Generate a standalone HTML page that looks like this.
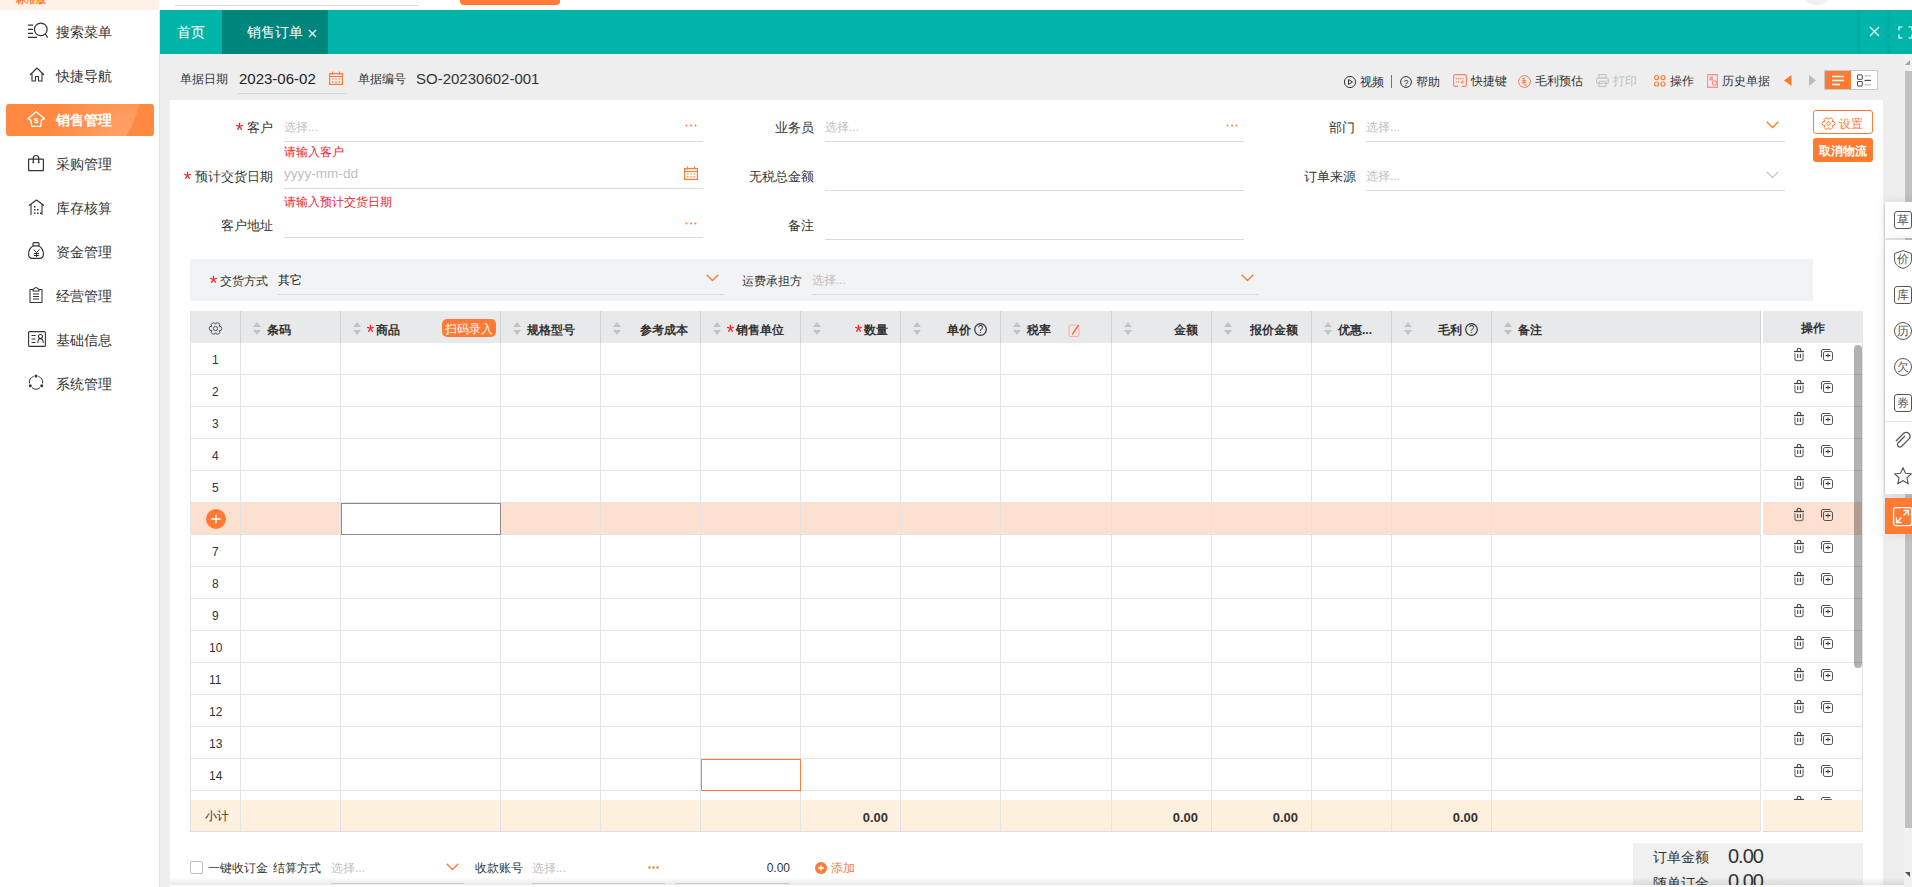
<!DOCTYPE html><html><head><meta charset="utf-8"><style>
*{margin:0;padding:0;box-sizing:border-box}
html,body{width:1912px;height:887px;overflow:hidden;background:#fff;font-family:"Liberation Sans",sans-serif;color:#333}
.a{position:absolute}
.t{position:absolute;white-space:nowrap;line-height:1}
svg{position:absolute;overflow:visible}
</style></head><body><div class="a" style="left:0px;top:0px;width:159px;height:10px;background:#fff1ea"></div>
<div class="t" style="left:16px;top:-5px;font-size:9.5px;color:#ff7a33;font-weight:bold">标准版</div>
<div class="a" style="left:175px;top:5px;width:244px;height:1px;background:#ddd"></div>
<div class="a" style="left:460px;top:-4px;width:100px;height:9px;background:#ff7a33;border-radius:4px"></div>
<div class="a" style="left:1805px;top:-8px;width:24px;height:13px;background:#f0f0f0;border-radius:50%"></div>
<div class="a" style="left:159px;top:10px;width:1px;height:877px;background:#e2e2e2"></div>
<div class="a" style="left:6px;top:104px;width:148px;height:32px;background:#ff8940;border-radius:3px;overflow:hidden"><div class="a" style="left:-80px;top:-132px;width:216px;height:216px;border-radius:50%;background:radial-gradient(circle at 50% 50%,rgba(255,255,255,0) 50%,rgba(255,255,255,.1) 100%),radial-gradient(circle at 90% 78%,rgba(255,255,255,.2) 0,rgba(255,255,255,0) 30%)"></div></div>
<div class="t" style="left:56px;top:25px;font-size:14px;color:#333;">搜索菜单</div>
<div class="t" style="left:56px;top:69px;font-size:14px;color:#333;">快捷导航</div>
<div class="t" style="left:56px;top:113px;font-size:14px;color:#fff;font-weight:bold">销售管理</div>
<div class="t" style="left:56px;top:157px;font-size:14px;color:#333;">采购管理</div>
<div class="t" style="left:56px;top:201px;font-size:14px;color:#333;">库存核算</div>
<div class="t" style="left:56px;top:245px;font-size:14px;color:#333;">资金管理</div>
<div class="t" style="left:56px;top:289px;font-size:14px;color:#333;">经营管理</div>
<div class="t" style="left:56px;top:333px;font-size:14px;color:#333;">基础信息</div>
<div class="t" style="left:56px;top:377px;font-size:14px;color:#333;">系统管理</div>
<svg style="left:27px;top:22px" width="22" height="17" viewBox="0 0 22 17"><g fill="none" stroke="#333" stroke-width="1.2"><path d="M1 3.2h5M1 7.3h5M1 11.4h5M1 15.3h9"/><circle cx="13.8" cy="7.4" r="6.3"/><path d="M18.3 12l2.4 3.6"/></g></svg>
<svg style="left:29px;top:67px" width="16" height="15" viewBox="0 0 16 15"><g fill="none" stroke="#333" stroke-width="1.1" stroke-linejoin="round"><path d="M1 8L8 1l7 7M3 6.5V14h3.5V9.5h3V14H13V6.5"/></g></svg>
<svg style="left:27px;top:110px" width="19" height="18" viewBox="0 0 19 18"><path d="M9.2 1.7L1.1 8.6L4 10.4L4.8 16.4H13.7L14.4 10.4L17.3 8.6Z" fill="none" stroke="#fff" stroke-width="1.3" stroke-linejoin="round"/><text x="9.2" y="13" font-size="8" font-weight="bold" fill="#fff" text-anchor="middle" font-family="Liberation Sans">$</text></svg>
<svg style="left:27px;top:154px" width="18" height="18" viewBox="0 0 18 18"><g fill="none" stroke="#333" stroke-width="1.2"><rect x="1.6" y="5.1" width="14.8" height="11.6" rx=".6"/><path d="M6.3 8.2V4.2a2.7 2.7 0 0 1 5.4 0v4"/></g><circle cx="6.3" cy="8.4" r=".9" fill="#333"/><circle cx="11.7" cy="8.4" r=".9" fill="#333"/></svg>
<svg style="left:28px;top:199px" width="17" height="16" viewBox="0 0 17 16"><g fill="none" stroke="#333" stroke-width="1.1" stroke-linejoin="round"><path d="M1 6.5L8.5 1 16 6.5M3 5v11M14 5v11"/></g><g fill="#333"><rect x="6" y="7" width="1.5" height="1.5"/><rect x="6" y="10" width="1.5" height="1.5"/><rect x="9" y="10" width="1.5" height="1.5"/><rect x="6" y="13.5" width="1.5" height="1.5"/><rect x="9" y="13.5" width="1.5" height="1.5"/><rect x="12" y="13.5" width="1.5" height="1.5"/></g></svg>
<svg style="left:27px;top:241px" width="18" height="19" viewBox="0 0 18 19"><g fill="none" stroke="#333" stroke-width="1.2" stroke-linejoin="round"><rect x="6" y="1.6" width="6" height="3.2" rx="1"/><path d="M6.6 4.8C3 6.6 1.6 10 1.6 13.2c0 2.4 1.4 4.2 3.8 4.2h7.2c2.4 0 3.8-1.8 3.8-4.2 0-3.2-1.4-6.6-5-8.4"/><path d="M6.5 8.5L9.5 11.5L12.5 8.5M9.5 11.5V16M7 12.5H12M7 14.5H12" stroke-width="1"/></g></svg>
<svg style="left:29px;top:287px" width="14" height="16" viewBox="0 0 14 16"><g fill="none" stroke="#333" stroke-width="1.05" stroke-linejoin="round"><path d="M4 2.5H1v13h12v-13h-3"/><path d="M4 4V2.5l2-1.7h2l2 1.7V4z"/><path d="M4 7h6M4 9.5h6M4 12h6"/></g></svg>
<svg style="left:28px;top:331px" width="18" height="16" viewBox="0 0 18 16"><g fill="none" stroke="#333" stroke-width="1.1"><rect x="0.6" y="0.6" width="16.8" height="14.8" rx="1"/><path d="M3.5 4.5h4M3.5 8h4M3.5 11.5h4"/><circle cx="12.5" cy="5.5" r="2"/><path d="M9.8 12c0-2.5 1.2-4.3 2.7-4.3s2.7 1.8 2.7 4.3"/></g></svg>
<svg style="left:28px;top:374px" width="16" height="17" viewBox="0 0 16 17"><g fill="none" stroke="#333" stroke-width="1"><path d="M10.47 2.38A6.6 6.6 0 0 1 14.54 9.42M12.06 13.70A6.6 6.6 0 0 1 3.94 13.70M1.46 9.42A6.6 6.6 0 0 1 5.53 2.38"/></g><g fill="#333"><circle cx="8.00" cy="1.90" r="1.5"/><circle cx="2.28" cy="11.80" r="1.5"/><circle cx="13.72" cy="11.80" r="1.5"/></g></svg>
<div class="a" style="left:160px;top:10px;width:1752px;height:44px;background:#00b4aa"></div>
<div class="a" style="left:222px;top:10px;width:106px;height:44px;background:#00857d"></div>
<div class="t" style="left:177px;top:25px;font-size:14px;color:#fff;">首页</div>
<div class="t" style="left:247px;top:25px;font-size:14px;color:#fff;">销售订单</div>
<svg style="left:308px;top:29px" width="9" height="9" viewBox="0 0 9 9"><path d="M1 1l7 7M8 1L1 8" stroke="#fff" stroke-width="1.2"/></svg>
<div class="a" style="left:1855px;top:10px;width:5px;height:44px;background:linear-gradient(90deg,rgba(0,0,0,0),rgba(0,0,0,.07))"></div>
<div class="a" style="left:1885px;top:10px;width:5px;height:44px;background:linear-gradient(90deg,rgba(0,0,0,0),rgba(0,0,0,.07))"></div>
<svg style="left:1869px;top:26px" width="11" height="11" viewBox="0 0 11 11"><path d="M1 1l9 9M10 1L1 10" stroke="#fff" stroke-width="1.2"/></svg>
<svg style="left:1898px;top:26px" width="15" height="13" viewBox="0 0 15 13"><path d="M1 4.5V1h3.5M10.5 1H14v3.5M14 8.5V12h-3.5M4.5 12H1V8.5" fill="none" stroke="#fff" stroke-width="1.2"/></svg>
<div class="a" style="left:160px;top:54px;width:1752px;height:833px;background:#eeeeee"></div>
<div class="a" style="left:1904px;top:54px;width:8px;height:833px;background:#f1f1f1"></div>
<div class="a" style="left:1905px;top:71px;width:7px;height:757px;background:#c1c1c1"></div>
<svg style="left:1904px;top:60px" width="8" height="6" viewBox="0 0 8 6"><path d="M1 5L6 0v5z" fill="#a3a3a3"/></svg>
<svg style="left:1904px;top:872px" width="8" height="6" viewBox="0 0 8 6"><path d="M1 0h5v5z" fill="#505050"/></svg>
<div class="t" style="left:180px;top:73px;font-size:12px;color:#333;">单据日期</div>
<div class="t" style="left:239px;top:71px;font-size:15px;color:#222;">2023-06-02</div>
<div class="a" style="left:238px;top:93px;width:109px;height:1px;background:#d9d9d9"></div>
<svg style="left:329px;top:71px" width="14" height="14" viewBox="0 0 14 14"><g fill="none" stroke="#ff7a33" stroke-width="1.2"><rect x="0.6" y="2.6" width="12.8" height="10.8"/><path d="M0.6 5.5h12.8M3.5 0.5v3M10.5 0.5v3"/><path d="M3 8h1.5M6.2 8h1.5M9.5 8h1.5M3 10.8h1.5M6.2 10.8h1.5M9.5 10.8h1.5"/></g></svg>
<div class="t" style="left:358px;top:73px;font-size:12px;color:#333;">单据编号</div>
<div class="t" style="left:416px;top:71px;font-size:15px;color:#333;">SO-20230602-001</div>
<svg style="left:1344px;top:76px" width="12" height="12" viewBox="0 0 12 12"><g fill="none" stroke="#333" stroke-width="1"><circle cx="6" cy="6" r="5.6"/><path d="M4.5 3.5v5l4-2.5z"/></g></svg>
<div class="t" style="left:1360px;top:76px;font-size:12px;color:#333;">视频</div>
<div class="a" style="left:1391px;top:75px;width:1px;height:13px;background:#8a6a6a"></div>
<svg style="left:1400px;top:75.5px" width="12" height="12" viewBox="0 0 12 12"><g fill="none" stroke="#333" stroke-width="1"><circle cx="6" cy="6" r="5.4"/></g><text x="6" y="9.6" font-size="9" text-anchor="middle" fill="#333" font-family="Liberation Sans">?</text></svg>
<div class="t" style="left:1416px;top:76px;font-size:12px;color:#333;">帮助</div>
<svg style="left:1453px;top:74px" width="14" height="13" viewBox="0 0 14 13"><g fill="none" stroke="#ff7f5a" stroke-width="1.1"><path d="M5.2 12.4H2.1A1.5 1.5 0 0 1 0.6 10.9V2.1A1.5 1.5 0 0 1 2.1 0.6H11.9A1.5 1.5 0 0 1 13.4 2.1V10.9A1.5 1.5 0 0 1 11.9 12.4H8.8"/><path d="M9.8 6.2V8.6H8"/></g><g fill="#ff7a55"><rect x="2.8" y="4" width="1.2" height="1.2"/><rect x="5" y="4" width="1.2" height="1.2"/><rect x="7.2" y="4" width="1.2" height="1.2"/><rect x="9.4" y="4" width="1.2" height="1.2"/><rect x="2.8" y="7.4" width="1.2" height="1.2"/><rect x="5" y="7.4" width="1.2" height="1.2"/></g></svg>
<div class="t" style="left:1471px;top:75px;font-size:12px;color:#333;">快捷键</div>
<svg style="left:1518px;top:74.5px" width="13" height="13" viewBox="0 0 13 13"><g fill="none" stroke="#ff7060" stroke-width="1"><circle cx="6.5" cy="6.5" r="5.9"/><path d="M4.2 3.6L6.8 3.2M3.8 5.6H8.2M3.6 7.6H8.4M6 3.4V8.6c0 1 .6 1.4 1.6 1.4H9" stroke="#ff7a33"/></g></svg>
<div class="t" style="left:1535px;top:75px;font-size:12px;color:#333;">毛利预估</div>
<svg style="left:1596px;top:74px" width="13" height="13" viewBox="0 0 13 13"><g fill="none" stroke="#c6c6c6" stroke-width="1.2"><rect x="3" y="0.6" width="7" height="3.5"/><rect x="0.6" y="4" width="11.8" height="5.5" rx="1.5"/><rect x="3" y="7.5" width="7" height="5"/></g></svg>
<div class="t" style="left:1613px;top:75px;font-size:12px;color:#c0c0c0;">打印</div>
<svg style="left:1654px;top:75px" width="12" height="12" viewBox="0 0 12 12"><g fill="none" stroke="#ff7a33" stroke-width="1.1"><rect x="0.6" y="0.6" width="4" height="4" rx="2"/><rect x="7" y="0.6" width="4" height="4" rx="2"/><rect x="0.6" y="7" width="4" height="4" rx="2"/><rect x="7" y="7" width="4" height="4" rx="2"/></g></svg>
<div class="t" style="left:1670px;top:75px;font-size:12px;color:#333;">操作</div>
<svg style="left:1707px;top:74px" width="11" height="14" viewBox="0 0 11 14"><g fill="none" stroke="#ff8a8a" stroke-width="1.1"><path d="M0.6 0.6h9.8v12.8H0.6z"/><rect x="2.5" y="2.5" width="3.5" height="4" fill="#ff9a9a" stroke="none"/><circle cx="7.5" cy="9" r="2.2"/></g></svg>
<div class="t" style="left:1722px;top:75px;font-size:12px;color:#333;">历史单据</div>
<svg style="left:1784px;top:75px" width="8" height="11" viewBox="0 0 8 11"><path d="M7.5 0v11L0 5.5z" fill="#ff7a33"/></svg>
<svg style="left:1809px;top:75px" width="7" height="11" viewBox="0 0 7 11"><path d="M0 0v11l7-5.5z" fill="#bcbcbc"/></svg>
<div class="a" style="left:1824px;top:70px;width:54px;height:20px;background:#fff;border:1px solid #c8c8c8"></div>
<div class="a" style="left:1825px;top:71px;width:26px;height:18px;background:#ff7a33"></div>
<svg style="left:1831px;top:75px" width="14" height="11" viewBox="0 0 14 11"><path d="M1 1.5h12M1 5.5h12M1 9.5h8" stroke="#fff" stroke-width="1.5"/></svg>
<svg style="left:1856px;top:74px" width="18" height="13" viewBox="0 0 18 13"><g fill="none" stroke="#444" stroke-width="1"><rect x="1.5" y="0.9" width="4.8" height="4.4" rx="0.5"/><rect x="1.5" y="7.5" width="4.8" height="4.6" rx="0.5"/></g><path d="M8.5 1.9h6.5M8.5 10.8h6.5" stroke="#c0c0c0" stroke-width="1.2"/><path d="M8.5 6.4h6.5" stroke="#444" stroke-width="1.1"/></svg>
<div class="a" style="left:170px;top:100px;width:1713px;height:787px;background:#fff"></div>
<div class="t" style="right:1639px;top:121px;font-size:13px;color:#333;">客户</div>
<svg style="left:236px;top:122.5px" width="7" height="7" viewBox="0 0 7 7"><path d="M3.5 0.2V4M3.5 3.5L0.6 2.4M3.5 3.5L6.4 2.4M3.5 3.5L1.6 6.3M3.5 3.5L5.4 6.3" stroke="#f5222d" stroke-width="1.3" stroke-linecap="round"/></svg>
<div class="t" style="left:284px;top:121px;font-size:12px;color:#c0c0c0;">选择...</div>
<div class="a" style="left:284px;top:141px;width:419px;height:1px;background:#dcdcdc"></div>
<svg style="left:685px;top:124px" width="12" height="3" viewBox="0 0 12 3"><g fill="#ff7a33"><circle cx="1.5" cy="1.5" r="1"/><circle cx="6" cy="1.5" r="1"/><circle cx="10.5" cy="1.5" r="1"/></g></svg>
<div class="t" style="left:284px;top:146px;font-size:12px;color:#f5222d;">请输入客户</div>
<div class="t" style="right:1639px;top:170px;font-size:13px;color:#333;">预计交货日期</div>
<svg style="left:184px;top:171.5px" width="7" height="7" viewBox="0 0 7 7"><path d="M3.5 0.2V4M3.5 3.5L0.6 2.4M3.5 3.5L6.4 2.4M3.5 3.5L1.6 6.3M3.5 3.5L5.4 6.3" stroke="#f5222d" stroke-width="1.3" stroke-linecap="round"/></svg>
<div class="t" style="left:284px;top:167px;font-size:13.6px;color:#c0c0c0;">yyyy-mm-dd</div>
<div class="a" style="left:284px;top:188px;width:419px;height:1px;background:#dcdcdc"></div>
<svg style="left:684px;top:166px" width="14" height="14" viewBox="0 0 14 14"><g fill="none" stroke="#ff7a33" stroke-width="1.2"><rect x="0.6" y="2.6" width="12.8" height="10.8"/><path d="M0.6 5.5h12.8M3.5 0.5v3M10.5 0.5v3"/><path d="M3 8h1.5M6.2 8h1.5M9.5 8h1.5M3 10.8h1.5M6.2 10.8h1.5M9.5 10.8h1.5"/></g></svg>
<div class="t" style="left:284px;top:196px;font-size:12px;color:#f5222d;">请输入预计交货日期</div>
<div class="t" style="right:1639px;top:219px;font-size:13px;color:#333;">客户地址</div>
<div class="a" style="left:284px;top:237px;width:419px;height:1px;background:#dcdcdc"></div>
<svg style="left:685px;top:222px" width="12" height="3" viewBox="0 0 12 3"><g fill="#ff7a33"><circle cx="1.5" cy="1.5" r="1"/><circle cx="6" cy="1.5" r="1"/><circle cx="10.5" cy="1.5" r="1"/></g></svg>
<div class="t" style="right:1098px;top:121px;font-size:13px;color:#333;">业务员</div>
<div class="t" style="left:825px;top:121px;font-size:12px;color:#c0c0c0;">选择...</div>
<div class="a" style="left:825px;top:141px;width:419px;height:1px;background:#dcdcdc"></div>
<svg style="left:1226px;top:124px" width="12" height="3" viewBox="0 0 12 3"><g fill="#ff7a33"><circle cx="1.5" cy="1.5" r="1"/><circle cx="6" cy="1.5" r="1"/><circle cx="10.5" cy="1.5" r="1"/></g></svg>
<div class="t" style="right:1098px;top:170px;font-size:13px;color:#333;">无税总金额</div>
<div class="a" style="left:825px;top:190px;width:419px;height:1px;background:#dcdcdc"></div>
<div class="t" style="right:1098px;top:219px;font-size:13px;color:#333;">备注</div>
<div class="a" style="left:825px;top:239px;width:419px;height:1px;background:#dcdcdc"></div>
<div class="t" style="right:557px;top:121px;font-size:13px;color:#333;">部门</div>
<div class="t" style="left:1366px;top:121px;font-size:12px;color:#c0c0c0;">选择...</div>
<div class="a" style="left:1366px;top:141px;width:419px;height:1px;background:#dcdcdc"></div>
<svg style="left:1766px;top:121px" width="13" height="8" viewBox="0 0 13 8"><path d="M0.7 0.7l5.8 5.8 5.8-5.8" fill="none" stroke="#ff7a33" stroke-width="1.3"/></svg>
<div class="t" style="right:556px;top:170px;font-size:13px;color:#333;">订单来源</div>
<div class="t" style="left:1366px;top:170px;font-size:12px;color:#c0c0c0;">选择...</div>
<div class="a" style="left:1366px;top:190px;width:419px;height:1px;background:#dcdcdc"></div>
<svg style="left:1766px;top:170.5px" width="13" height="8" viewBox="0 0 13 8"><path d="M0.7 0.7l5.8 5.8 5.8-5.8" fill="none" stroke="#c8c8c8" stroke-width="1.3"/></svg>
<div class="a" style="left:1813px;top:110px;width:60px;height:24px;border:1px solid #ff7a33;border-radius:3px;background:#fff"></div>
<svg style="left:1822px;top:117px" width="13" height="13" viewBox="0 0 13 13"><g fill="none" stroke="#ff7a33" stroke-width="1"><path d="M10.14 4.40A2.15 2.15 0 1 1 10.14 8.60A2.15 2.15 0 1 1 6.50 10.70A2.15 2.15 0 1 1 2.86 8.60A2.15 2.15 0 1 1 2.86 4.40A2.15 2.15 0 1 1 6.50 2.30A2.15 2.15 0 1 1 10.14 4.40Z"/><circle cx="6.5" cy="6.5" r="1.8"/></g></svg>
<div class="t" style="left:1839px;top:118px;font-size:12px;color:#ff7a33;">设置</div>
<div class="a" style="left:1813px;top:138px;width:60px;height:24px;background:#ff7a33;border-radius:3px"></div>
<div class="t" style="left:1819px;top:145px;font-size:12px;color:#fff;font-weight:bold">取消物流</div>
<div class="a" style="left:190px;top:259px;width:1623px;height:42px;background:#f2f3f5"></div>
<svg style="left:210px;top:275.5px" width="7" height="7" viewBox="0 0 7 7"><path d="M3.5 0.2V4M3.5 3.5L0.6 2.4M3.5 3.5L6.4 2.4M3.5 3.5L1.6 6.3M3.5 3.5L5.4 6.3" stroke="#f5222d" stroke-width="1.3" stroke-linecap="round"/></svg>
<div class="t" style="left:220px;top:275px;font-size:12px;color:#333;">交货方式</div>
<div class="t" style="left:278px;top:274px;font-size:12px;color:#111;">其它</div>
<div class="a" style="left:278px;top:294px;width:446px;height:1px;background:#dcdcdc"></div>
<svg style="left:706px;top:274px" width="13" height="8" viewBox="0 0 13 8"><path d="M0.7 0.7l5.8 5.8 5.8-5.8" fill="none" stroke="#ff7a33" stroke-width="1.3"/></svg>
<div class="t" style="left:742px;top:275px;font-size:12px;color:#333;">运费承担方</div>
<div class="t" style="left:812px;top:274px;font-size:12px;color:#c0c0c0;">选择...</div>
<div class="a" style="left:812px;top:294px;width:447px;height:1px;background:#dcdcdc"></div>
<svg style="left:1241px;top:274px" width="13" height="8" viewBox="0 0 13 8"><path d="M0.7 0.7l5.8 5.8 5.8-5.8" fill="none" stroke="#ff7a33" stroke-width="1.3"/></svg>
<div class="a" style="left:191px;top:503px;width:1569px;height:31px;background:#fde0cf"></div>
<div class="a" style="left:1763px;top:503px;width:100px;height:31px;background:#fde0cf"></div>
<div class="a" style="left:191px;top:800px;width:1569px;height:31px;background:#fdf0dc"></div>
<div class="a" style="left:1763px;top:800px;width:100px;height:31px;background:#fdf0dc"></div>
<div class="a" style="left:191px;top:311px;width:1569px;height:32px;background:#e8e9eb"></div>
<div class="a" style="left:1763px;top:311px;width:100px;height:32px;background:#e8e9eb"></div>
<div class="a" style="left:190px;top:311px;width:1px;height:521px;background:#e3e3e3"></div>
<div class="a" style="left:240px;top:311px;width:1px;height:32px;background:#cfd0d2"></div>
<div class="a" style="left:240px;top:343px;width:1px;height:488px;background:#e3e3e3"></div>
<div class="a" style="left:340px;top:311px;width:1px;height:32px;background:#cfd0d2"></div>
<div class="a" style="left:340px;top:343px;width:1px;height:488px;background:#e3e3e3"></div>
<div class="a" style="left:500px;top:311px;width:1px;height:32px;background:#cfd0d2"></div>
<div class="a" style="left:500px;top:343px;width:1px;height:488px;background:#e3e3e3"></div>
<div class="a" style="left:600px;top:311px;width:1px;height:32px;background:#cfd0d2"></div>
<div class="a" style="left:600px;top:343px;width:1px;height:488px;background:#e3e3e3"></div>
<div class="a" style="left:700px;top:311px;width:1px;height:32px;background:#cfd0d2"></div>
<div class="a" style="left:700px;top:343px;width:1px;height:488px;background:#e3e3e3"></div>
<div class="a" style="left:800px;top:311px;width:1px;height:32px;background:#cfd0d2"></div>
<div class="a" style="left:800px;top:343px;width:1px;height:488px;background:#e3e3e3"></div>
<div class="a" style="left:900px;top:311px;width:1px;height:32px;background:#cfd0d2"></div>
<div class="a" style="left:900px;top:343px;width:1px;height:488px;background:#e3e3e3"></div>
<div class="a" style="left:1000px;top:311px;width:1px;height:32px;background:#cfd0d2"></div>
<div class="a" style="left:1000px;top:343px;width:1px;height:488px;background:#e3e3e3"></div>
<div class="a" style="left:1111px;top:311px;width:1px;height:32px;background:#cfd0d2"></div>
<div class="a" style="left:1111px;top:343px;width:1px;height:488px;background:#e3e3e3"></div>
<div class="a" style="left:1211px;top:311px;width:1px;height:32px;background:#cfd0d2"></div>
<div class="a" style="left:1211px;top:343px;width:1px;height:488px;background:#e3e3e3"></div>
<div class="a" style="left:1311px;top:311px;width:1px;height:32px;background:#cfd0d2"></div>
<div class="a" style="left:1311px;top:343px;width:1px;height:488px;background:#e3e3e3"></div>
<div class="a" style="left:1391px;top:311px;width:1px;height:32px;background:#cfd0d2"></div>
<div class="a" style="left:1391px;top:343px;width:1px;height:488px;background:#e3e3e3"></div>
<div class="a" style="left:1491px;top:311px;width:1px;height:32px;background:#cfd0d2"></div>
<div class="a" style="left:1491px;top:343px;width:1px;height:488px;background:#e3e3e3"></div>
<div class="a" style="left:1760px;top:311px;width:1px;height:32px;background:#cfd0d2"></div>
<div class="a" style="left:1760px;top:343px;width:1px;height:488px;background:#e3e3e3"></div>
<div class="a" style="left:1862px;top:343px;width:1px;height:489px;background:#e3e3e3"></div>
<div class="a" style="left:191px;top:374px;width:1569px;height:1px;background:#e3e3e3"></div>
<div class="a" style="left:1763px;top:374px;width:99px;height:1px;background:#e3e3e3"></div>
<div class="a" style="left:191px;top:406px;width:1569px;height:1px;background:#e3e3e3"></div>
<div class="a" style="left:1763px;top:406px;width:99px;height:1px;background:#e3e3e3"></div>
<div class="a" style="left:191px;top:438px;width:1569px;height:1px;background:#e3e3e3"></div>
<div class="a" style="left:1763px;top:438px;width:99px;height:1px;background:#e3e3e3"></div>
<div class="a" style="left:191px;top:470px;width:1569px;height:1px;background:#e3e3e3"></div>
<div class="a" style="left:1763px;top:470px;width:99px;height:1px;background:#e3e3e3"></div>
<div class="a" style="left:191px;top:502px;width:1569px;height:1px;background:#e3e3e3"></div>
<div class="a" style="left:1763px;top:502px;width:99px;height:1px;background:#e3e3e3"></div>
<div class="a" style="left:191px;top:534px;width:1569px;height:1px;background:#e3e3e3"></div>
<div class="a" style="left:1763px;top:534px;width:99px;height:1px;background:#e3e3e3"></div>
<div class="a" style="left:191px;top:566px;width:1569px;height:1px;background:#e3e3e3"></div>
<div class="a" style="left:1763px;top:566px;width:99px;height:1px;background:#e3e3e3"></div>
<div class="a" style="left:191px;top:598px;width:1569px;height:1px;background:#e3e3e3"></div>
<div class="a" style="left:1763px;top:598px;width:99px;height:1px;background:#e3e3e3"></div>
<div class="a" style="left:191px;top:630px;width:1569px;height:1px;background:#e3e3e3"></div>
<div class="a" style="left:1763px;top:630px;width:99px;height:1px;background:#e3e3e3"></div>
<div class="a" style="left:191px;top:662px;width:1569px;height:1px;background:#e3e3e3"></div>
<div class="a" style="left:1763px;top:662px;width:99px;height:1px;background:#e3e3e3"></div>
<div class="a" style="left:191px;top:694px;width:1569px;height:1px;background:#e3e3e3"></div>
<div class="a" style="left:1763px;top:694px;width:99px;height:1px;background:#e3e3e3"></div>
<div class="a" style="left:191px;top:726px;width:1569px;height:1px;background:#e3e3e3"></div>
<div class="a" style="left:1763px;top:726px;width:99px;height:1px;background:#e3e3e3"></div>
<div class="a" style="left:191px;top:758px;width:1569px;height:1px;background:#e3e3e3"></div>
<div class="a" style="left:1763px;top:758px;width:99px;height:1px;background:#e3e3e3"></div>
<div class="a" style="left:191px;top:790px;width:1569px;height:1px;background:#e3e3e3"></div>
<div class="a" style="left:1763px;top:790px;width:99px;height:1px;background:#e3e3e3"></div>
<div class="a" style="left:190px;top:831px;width:1570px;height:1px;background:#dcdcdc"></div>
<div class="a" style="left:1763px;top:831px;width:100px;height:1px;background:#dcdcdc"></div>
<div class="a" style="left:341px;top:503px;width:160px;height:32px;background:#fff;border:1px solid #8c8c8c"></div>
<div class="a" style="left:701px;top:759px;width:100px;height:32px;border:1px solid #ff7a33"></div>
<svg style="left:209px;top:322px" width="13" height="13" viewBox="0 0 13 13"><g fill="none" stroke="#555" stroke-width="1"><path d="M10.14 4.40A2.15 2.15 0 1 1 10.14 8.60A2.15 2.15 0 1 1 6.50 10.70A2.15 2.15 0 1 1 2.86 8.60A2.15 2.15 0 1 1 2.86 4.40A2.15 2.15 0 1 1 6.50 2.30A2.15 2.15 0 1 1 10.14 4.40Z"/><circle cx="6.5" cy="6.5" r="2.1"/></g></svg>
<svg style="left:253px;top:322px" width="8" height="13" viewBox="0 0 8 13"><path d="M4 0L8 5H0z M4 13L8 8H0z" fill="#c2c2c2"/></svg>
<div class="t" style="left:267px;top:324px;font-size:12px;color:#333;font-weight:bold">条码</div>
<svg style="left:353px;top:322px" width="8" height="13" viewBox="0 0 8 13"><path d="M4 0L8 5H0z M4 13L8 8H0z" fill="#c2c2c2"/></svg>
<svg style="left:367px;top:324.5px" width="7" height="7" viewBox="0 0 7 7"><path d="M3.5 0.2V4M3.5 3.5L0.6 2.4M3.5 3.5L6.4 2.4M3.5 3.5L1.6 6.3M3.5 3.5L5.4 6.3" stroke="#f5222d" stroke-width="1.3" stroke-linecap="round"/></svg>
<div class="t" style="left:376px;top:324px;font-size:12px;color:#333;font-weight:bold">商品</div>
<div class="a" style="left:442px;top:319px;width:54px;height:18px;background:#ff7a33;border-radius:5px"></div>
<div class="t" style="left:445px;top:323px;font-size:12px;color:#fff;">扫码录入</div>
<svg style="left:513px;top:322px" width="8" height="13" viewBox="0 0 8 13"><path d="M4 0L8 5H0z M4 13L8 8H0z" fill="#c2c2c2"/></svg>
<div class="t" style="left:527px;top:324px;font-size:12px;color:#333;font-weight:bold">规格型号</div>
<svg style="left:613px;top:322px" width="8" height="13" viewBox="0 0 8 13"><path d="M4 0L8 5H0z M4 13L8 8H0z" fill="#c2c2c2"/></svg>
<div class="t" style="right:1224px;top:324px;font-size:12px;color:#333;font-weight:bold">参考成本</div>
<svg style="left:713px;top:322px" width="8" height="13" viewBox="0 0 8 13"><path d="M4 0L8 5H0z M4 13L8 8H0z" fill="#c2c2c2"/></svg>
<svg style="left:727px;top:324.5px" width="7" height="7" viewBox="0 0 7 7"><path d="M3.5 0.2V4M3.5 3.5L0.6 2.4M3.5 3.5L6.4 2.4M3.5 3.5L1.6 6.3M3.5 3.5L5.4 6.3" stroke="#f5222d" stroke-width="1.3" stroke-linecap="round"/></svg>
<div class="t" style="left:736px;top:324px;font-size:12px;color:#333;font-weight:bold">销售单位</div>
<svg style="left:813px;top:322px" width="8" height="13" viewBox="0 0 8 13"><path d="M4 0L8 5H0z M4 13L8 8H0z" fill="#c2c2c2"/></svg>
<svg style="left:855px;top:324.5px" width="7" height="7" viewBox="0 0 7 7"><path d="M3.5 0.2V4M3.5 3.5L0.6 2.4M3.5 3.5L6.4 2.4M3.5 3.5L1.6 6.3M3.5 3.5L5.4 6.3" stroke="#f5222d" stroke-width="1.3" stroke-linecap="round"/></svg>
<div class="t" style="right:1024px;top:324px;font-size:12px;color:#333;font-weight:bold">数量</div>
<svg style="left:913px;top:322px" width="8" height="13" viewBox="0 0 8 13"><path d="M4 0L8 5H0z M4 13L8 8H0z" fill="#c2c2c2"/></svg>
<div class="t" style="right:941px;top:324px;font-size:12px;color:#333;font-weight:bold">单价</div>
<svg style="left:974px;top:323px" width="13" height="13" viewBox="0 0 13 13"><circle cx="6.5" cy="6.5" r="5.8" fill="none" stroke="#333" stroke-width="1.2"/><text x="6.5" y="10.2" font-size="10" text-anchor="middle" fill="#333" font-family="Liberation Sans">?</text></svg>
<svg style="left:1013px;top:322px" width="8" height="13" viewBox="0 0 8 13"><path d="M4 0L8 5H0z M4 13L8 8H0z" fill="#c2c2c2"/></svg>
<div class="t" style="left:1027px;top:324px;font-size:12px;color:#333;font-weight:bold">税率</div>
<svg style="left:1068px;top:324px" width="12" height="13" viewBox="0 0 12 13"><rect x="1" y="1" width="10" height="11.5" rx="1.5" fill="none" stroke="#ffb0a0" stroke-width="1.1"/><path d="M10.5 1.2L4.2 10.5" stroke="#ff6a2a" stroke-width="1.4"/></svg>
<svg style="left:1124px;top:322px" width="8" height="13" viewBox="0 0 8 13"><path d="M4 0L8 5H0z M4 13L8 8H0z" fill="#c2c2c2"/></svg>
<div class="t" style="right:714px;top:324px;font-size:12px;color:#333;font-weight:bold">金额</div>
<svg style="left:1224px;top:322px" width="8" height="13" viewBox="0 0 8 13"><path d="M4 0L8 5H0z M4 13L8 8H0z" fill="#c2c2c2"/></svg>
<div class="t" style="right:614px;top:324px;font-size:12px;color:#333;font-weight:bold">报价金额</div>
<svg style="left:1324px;top:322px" width="8" height="13" viewBox="0 0 8 13"><path d="M4 0L8 5H0z M4 13L8 8H0z" fill="#c2c2c2"/></svg>
<div class="t" style="left:1338px;top:324px;font-size:12px;color:#333;font-weight:bold">优惠...</div>
<svg style="left:1404px;top:322px" width="8" height="13" viewBox="0 0 8 13"><path d="M4 0L8 5H0z M4 13L8 8H0z" fill="#c2c2c2"/></svg>
<div class="t" style="right:450px;top:324px;font-size:12px;color:#333;font-weight:bold">毛利</div>
<svg style="left:1465px;top:323px" width="13" height="13" viewBox="0 0 13 13"><circle cx="6.5" cy="6.5" r="5.8" fill="none" stroke="#333" stroke-width="1.2"/><text x="6.5" y="10.2" font-size="10" text-anchor="middle" fill="#333" font-family="Liberation Sans">?</text></svg>
<svg style="left:1504px;top:322px" width="8" height="13" viewBox="0 0 8 13"><path d="M4 0L8 5H0z M4 13L8 8H0z" fill="#c2c2c2"/></svg>
<div class="t" style="left:1518px;top:324px;font-size:12px;color:#333;font-weight:bold">备注</div>
<div class="t" style="left:1801px;top:322px;font-size:12px;color:#333;font-weight:bold">操作</div>
<div class="t" style="left:212px;top:354px;font-size:12px;color:#333;">1</div>
<svg style="left:1793px;top:347px" width="12" height="15" viewBox="0 0 12 15"><g fill="none" stroke="#444" stroke-width="1.1"><path d="M1 4.5H11" stroke-width="1.3"/><path d="M4.2 4.3V3a1.8 1.8 0 0 1 3.6 0V4.3"/><path d="M1.9 6.2V11.6a2 2 0 0 0 2 2H8.1a2 2 0 0 0 2-2V6.2" stroke="#777" stroke-width="1.2"/><path d="M4.7 7V11M7.4 7V11"/></g></svg>
<svg style="left:1820px;top:348px" width="14" height="14" viewBox="0 0 14 14"><g fill="none" stroke="#555" stroke-width="1"><path d="M1.5 9.5V3A1.5 1.5 0 0 1 3 1.5H10.5"/><rect x="3.5" y="3.5" width="9" height="9" rx="1.6"/><path d="M5.6 7.5H10.3" stroke="#222" stroke-width="1.3"/><path d="M8 5.3V9.7" stroke="#666"/></g></svg>
<div class="t" style="left:212px;top:386px;font-size:12px;color:#333;">2</div>
<svg style="left:1793px;top:379px" width="12" height="15" viewBox="0 0 12 15"><g fill="none" stroke="#444" stroke-width="1.1"><path d="M1 4.5H11" stroke-width="1.3"/><path d="M4.2 4.3V3a1.8 1.8 0 0 1 3.6 0V4.3"/><path d="M1.9 6.2V11.6a2 2 0 0 0 2 2H8.1a2 2 0 0 0 2-2V6.2" stroke="#777" stroke-width="1.2"/><path d="M4.7 7V11M7.4 7V11"/></g></svg>
<svg style="left:1820px;top:380px" width="14" height="14" viewBox="0 0 14 14"><g fill="none" stroke="#555" stroke-width="1"><path d="M1.5 9.5V3A1.5 1.5 0 0 1 3 1.5H10.5"/><rect x="3.5" y="3.5" width="9" height="9" rx="1.6"/><path d="M5.6 7.5H10.3" stroke="#222" stroke-width="1.3"/><path d="M8 5.3V9.7" stroke="#666"/></g></svg>
<div class="t" style="left:212px;top:418px;font-size:12px;color:#333;">3</div>
<svg style="left:1793px;top:411px" width="12" height="15" viewBox="0 0 12 15"><g fill="none" stroke="#444" stroke-width="1.1"><path d="M1 4.5H11" stroke-width="1.3"/><path d="M4.2 4.3V3a1.8 1.8 0 0 1 3.6 0V4.3"/><path d="M1.9 6.2V11.6a2 2 0 0 0 2 2H8.1a2 2 0 0 0 2-2V6.2" stroke="#777" stroke-width="1.2"/><path d="M4.7 7V11M7.4 7V11"/></g></svg>
<svg style="left:1820px;top:412px" width="14" height="14" viewBox="0 0 14 14"><g fill="none" stroke="#555" stroke-width="1"><path d="M1.5 9.5V3A1.5 1.5 0 0 1 3 1.5H10.5"/><rect x="3.5" y="3.5" width="9" height="9" rx="1.6"/><path d="M5.6 7.5H10.3" stroke="#222" stroke-width="1.3"/><path d="M8 5.3V9.7" stroke="#666"/></g></svg>
<div class="t" style="left:212px;top:450px;font-size:12px;color:#333;">4</div>
<svg style="left:1793px;top:443px" width="12" height="15" viewBox="0 0 12 15"><g fill="none" stroke="#444" stroke-width="1.1"><path d="M1 4.5H11" stroke-width="1.3"/><path d="M4.2 4.3V3a1.8 1.8 0 0 1 3.6 0V4.3"/><path d="M1.9 6.2V11.6a2 2 0 0 0 2 2H8.1a2 2 0 0 0 2-2V6.2" stroke="#777" stroke-width="1.2"/><path d="M4.7 7V11M7.4 7V11"/></g></svg>
<svg style="left:1820px;top:444px" width="14" height="14" viewBox="0 0 14 14"><g fill="none" stroke="#555" stroke-width="1"><path d="M1.5 9.5V3A1.5 1.5 0 0 1 3 1.5H10.5"/><rect x="3.5" y="3.5" width="9" height="9" rx="1.6"/><path d="M5.6 7.5H10.3" stroke="#222" stroke-width="1.3"/><path d="M8 5.3V9.7" stroke="#666"/></g></svg>
<div class="t" style="left:212px;top:482px;font-size:12px;color:#333;">5</div>
<svg style="left:1793px;top:475px" width="12" height="15" viewBox="0 0 12 15"><g fill="none" stroke="#444" stroke-width="1.1"><path d="M1 4.5H11" stroke-width="1.3"/><path d="M4.2 4.3V3a1.8 1.8 0 0 1 3.6 0V4.3"/><path d="M1.9 6.2V11.6a2 2 0 0 0 2 2H8.1a2 2 0 0 0 2-2V6.2" stroke="#777" stroke-width="1.2"/><path d="M4.7 7V11M7.4 7V11"/></g></svg>
<svg style="left:1820px;top:476px" width="14" height="14" viewBox="0 0 14 14"><g fill="none" stroke="#555" stroke-width="1"><path d="M1.5 9.5V3A1.5 1.5 0 0 1 3 1.5H10.5"/><rect x="3.5" y="3.5" width="9" height="9" rx="1.6"/><path d="M5.6 7.5H10.3" stroke="#222" stroke-width="1.3"/><path d="M8 5.3V9.7" stroke="#666"/></g></svg>
<svg style="left:206px;top:509px" width="20" height="20" viewBox="0 0 20 20"><circle cx="10" cy="10" r="10" fill="#ff7a33"/><path d="M10 5.5v9M5.5 10h9" stroke="#fff" stroke-width="1.3"/></svg>
<svg style="left:1793px;top:507px" width="12" height="15" viewBox="0 0 12 15"><g fill="none" stroke="#444" stroke-width="1.1"><path d="M1 4.5H11" stroke-width="1.3"/><path d="M4.2 4.3V3a1.8 1.8 0 0 1 3.6 0V4.3"/><path d="M1.9 6.2V11.6a2 2 0 0 0 2 2H8.1a2 2 0 0 0 2-2V6.2" stroke="#777" stroke-width="1.2"/><path d="M4.7 7V11M7.4 7V11"/></g></svg>
<svg style="left:1820px;top:508px" width="14" height="14" viewBox="0 0 14 14"><g fill="none" stroke="#555" stroke-width="1"><path d="M1.5 9.5V3A1.5 1.5 0 0 1 3 1.5H10.5"/><rect x="3.5" y="3.5" width="9" height="9" rx="1.6"/><path d="M5.6 7.5H10.3" stroke="#222" stroke-width="1.3"/><path d="M8 5.3V9.7" stroke="#666"/></g></svg>
<div class="t" style="left:212px;top:546px;font-size:12px;color:#333;">7</div>
<svg style="left:1793px;top:539px" width="12" height="15" viewBox="0 0 12 15"><g fill="none" stroke="#444" stroke-width="1.1"><path d="M1 4.5H11" stroke-width="1.3"/><path d="M4.2 4.3V3a1.8 1.8 0 0 1 3.6 0V4.3"/><path d="M1.9 6.2V11.6a2 2 0 0 0 2 2H8.1a2 2 0 0 0 2-2V6.2" stroke="#777" stroke-width="1.2"/><path d="M4.7 7V11M7.4 7V11"/></g></svg>
<svg style="left:1820px;top:540px" width="14" height="14" viewBox="0 0 14 14"><g fill="none" stroke="#555" stroke-width="1"><path d="M1.5 9.5V3A1.5 1.5 0 0 1 3 1.5H10.5"/><rect x="3.5" y="3.5" width="9" height="9" rx="1.6"/><path d="M5.6 7.5H10.3" stroke="#222" stroke-width="1.3"/><path d="M8 5.3V9.7" stroke="#666"/></g></svg>
<div class="t" style="left:212px;top:578px;font-size:12px;color:#333;">8</div>
<svg style="left:1793px;top:571px" width="12" height="15" viewBox="0 0 12 15"><g fill="none" stroke="#444" stroke-width="1.1"><path d="M1 4.5H11" stroke-width="1.3"/><path d="M4.2 4.3V3a1.8 1.8 0 0 1 3.6 0V4.3"/><path d="M1.9 6.2V11.6a2 2 0 0 0 2 2H8.1a2 2 0 0 0 2-2V6.2" stroke="#777" stroke-width="1.2"/><path d="M4.7 7V11M7.4 7V11"/></g></svg>
<svg style="left:1820px;top:572px" width="14" height="14" viewBox="0 0 14 14"><g fill="none" stroke="#555" stroke-width="1"><path d="M1.5 9.5V3A1.5 1.5 0 0 1 3 1.5H10.5"/><rect x="3.5" y="3.5" width="9" height="9" rx="1.6"/><path d="M5.6 7.5H10.3" stroke="#222" stroke-width="1.3"/><path d="M8 5.3V9.7" stroke="#666"/></g></svg>
<div class="t" style="left:212px;top:610px;font-size:12px;color:#333;">9</div>
<svg style="left:1793px;top:603px" width="12" height="15" viewBox="0 0 12 15"><g fill="none" stroke="#444" stroke-width="1.1"><path d="M1 4.5H11" stroke-width="1.3"/><path d="M4.2 4.3V3a1.8 1.8 0 0 1 3.6 0V4.3"/><path d="M1.9 6.2V11.6a2 2 0 0 0 2 2H8.1a2 2 0 0 0 2-2V6.2" stroke="#777" stroke-width="1.2"/><path d="M4.7 7V11M7.4 7V11"/></g></svg>
<svg style="left:1820px;top:604px" width="14" height="14" viewBox="0 0 14 14"><g fill="none" stroke="#555" stroke-width="1"><path d="M1.5 9.5V3A1.5 1.5 0 0 1 3 1.5H10.5"/><rect x="3.5" y="3.5" width="9" height="9" rx="1.6"/><path d="M5.6 7.5H10.3" stroke="#222" stroke-width="1.3"/><path d="M8 5.3V9.7" stroke="#666"/></g></svg>
<div class="t" style="left:209px;top:642px;font-size:12px;color:#333;">10</div>
<svg style="left:1793px;top:635px" width="12" height="15" viewBox="0 0 12 15"><g fill="none" stroke="#444" stroke-width="1.1"><path d="M1 4.5H11" stroke-width="1.3"/><path d="M4.2 4.3V3a1.8 1.8 0 0 1 3.6 0V4.3"/><path d="M1.9 6.2V11.6a2 2 0 0 0 2 2H8.1a2 2 0 0 0 2-2V6.2" stroke="#777" stroke-width="1.2"/><path d="M4.7 7V11M7.4 7V11"/></g></svg>
<svg style="left:1820px;top:636px" width="14" height="14" viewBox="0 0 14 14"><g fill="none" stroke="#555" stroke-width="1"><path d="M1.5 9.5V3A1.5 1.5 0 0 1 3 1.5H10.5"/><rect x="3.5" y="3.5" width="9" height="9" rx="1.6"/><path d="M5.6 7.5H10.3" stroke="#222" stroke-width="1.3"/><path d="M8 5.3V9.7" stroke="#666"/></g></svg>
<div class="t" style="left:209px;top:674px;font-size:12px;color:#333;">11</div>
<svg style="left:1793px;top:667px" width="12" height="15" viewBox="0 0 12 15"><g fill="none" stroke="#444" stroke-width="1.1"><path d="M1 4.5H11" stroke-width="1.3"/><path d="M4.2 4.3V3a1.8 1.8 0 0 1 3.6 0V4.3"/><path d="M1.9 6.2V11.6a2 2 0 0 0 2 2H8.1a2 2 0 0 0 2-2V6.2" stroke="#777" stroke-width="1.2"/><path d="M4.7 7V11M7.4 7V11"/></g></svg>
<svg style="left:1820px;top:668px" width="14" height="14" viewBox="0 0 14 14"><g fill="none" stroke="#555" stroke-width="1"><path d="M1.5 9.5V3A1.5 1.5 0 0 1 3 1.5H10.5"/><rect x="3.5" y="3.5" width="9" height="9" rx="1.6"/><path d="M5.6 7.5H10.3" stroke="#222" stroke-width="1.3"/><path d="M8 5.3V9.7" stroke="#666"/></g></svg>
<div class="t" style="left:209px;top:706px;font-size:12px;color:#333;">12</div>
<svg style="left:1793px;top:699px" width="12" height="15" viewBox="0 0 12 15"><g fill="none" stroke="#444" stroke-width="1.1"><path d="M1 4.5H11" stroke-width="1.3"/><path d="M4.2 4.3V3a1.8 1.8 0 0 1 3.6 0V4.3"/><path d="M1.9 6.2V11.6a2 2 0 0 0 2 2H8.1a2 2 0 0 0 2-2V6.2" stroke="#777" stroke-width="1.2"/><path d="M4.7 7V11M7.4 7V11"/></g></svg>
<svg style="left:1820px;top:700px" width="14" height="14" viewBox="0 0 14 14"><g fill="none" stroke="#555" stroke-width="1"><path d="M1.5 9.5V3A1.5 1.5 0 0 1 3 1.5H10.5"/><rect x="3.5" y="3.5" width="9" height="9" rx="1.6"/><path d="M5.6 7.5H10.3" stroke="#222" stroke-width="1.3"/><path d="M8 5.3V9.7" stroke="#666"/></g></svg>
<div class="t" style="left:209px;top:738px;font-size:12px;color:#333;">13</div>
<svg style="left:1793px;top:731px" width="12" height="15" viewBox="0 0 12 15"><g fill="none" stroke="#444" stroke-width="1.1"><path d="M1 4.5H11" stroke-width="1.3"/><path d="M4.2 4.3V3a1.8 1.8 0 0 1 3.6 0V4.3"/><path d="M1.9 6.2V11.6a2 2 0 0 0 2 2H8.1a2 2 0 0 0 2-2V6.2" stroke="#777" stroke-width="1.2"/><path d="M4.7 7V11M7.4 7V11"/></g></svg>
<svg style="left:1820px;top:732px" width="14" height="14" viewBox="0 0 14 14"><g fill="none" stroke="#555" stroke-width="1"><path d="M1.5 9.5V3A1.5 1.5 0 0 1 3 1.5H10.5"/><rect x="3.5" y="3.5" width="9" height="9" rx="1.6"/><path d="M5.6 7.5H10.3" stroke="#222" stroke-width="1.3"/><path d="M8 5.3V9.7" stroke="#666"/></g></svg>
<div class="t" style="left:209px;top:770px;font-size:12px;color:#333;">14</div>
<svg style="left:1793px;top:763px" width="12" height="15" viewBox="0 0 12 15"><g fill="none" stroke="#444" stroke-width="1.1"><path d="M1 4.5H11" stroke-width="1.3"/><path d="M4.2 4.3V3a1.8 1.8 0 0 1 3.6 0V4.3"/><path d="M1.9 6.2V11.6a2 2 0 0 0 2 2H8.1a2 2 0 0 0 2-2V6.2" stroke="#777" stroke-width="1.2"/><path d="M4.7 7V11M7.4 7V11"/></g></svg>
<svg style="left:1820px;top:764px" width="14" height="14" viewBox="0 0 14 14"><g fill="none" stroke="#555" stroke-width="1"><path d="M1.5 9.5V3A1.5 1.5 0 0 1 3 1.5H10.5"/><rect x="3.5" y="3.5" width="9" height="9" rx="1.6"/><path d="M5.6 7.5H10.3" stroke="#222" stroke-width="1.3"/><path d="M8 5.3V9.7" stroke="#666"/></g></svg>
<svg style="left:1793px;top:795px" width="12" height="15" viewBox="0 0 12 15"><g fill="none" stroke="#444" stroke-width="1.1"><path d="M1 4.5H11" stroke-width="1.3"/><path d="M4.2 4.3V3a1.8 1.8 0 0 1 3.6 0V4.3"/><path d="M1.9 6.2V11.6a2 2 0 0 0 2 2H8.1a2 2 0 0 0 2-2V6.2" stroke="#777" stroke-width="1.2"/><path d="M4.7 7V11M7.4 7V11"/></g></svg>
<svg style="left:1820px;top:796px" width="14" height="14" viewBox="0 0 14 14"><g fill="none" stroke="#555" stroke-width="1"><path d="M1.5 9.5V3A1.5 1.5 0 0 1 3 1.5H10.5"/><rect x="3.5" y="3.5" width="9" height="9" rx="1.6"/><path d="M5.6 7.5H10.3" stroke="#222" stroke-width="1.3"/><path d="M8 5.3V9.7" stroke="#666"/></g></svg>
<div class="a" style="left:191px;top:800px;width:1569px;height:31px;background:#fdf0dc"></div>
<div class="a" style="left:1763px;top:800px;width:100px;height:31px;background:#fdf0dc"></div>
<div class="a" style="left:190px;top:800px;width:1px;height:31px;background:#e3e3e3"></div>
<div class="a" style="left:240px;top:800px;width:1px;height:31px;background:#e3e3e3"></div>
<div class="a" style="left:340px;top:800px;width:1px;height:31px;background:#e3e3e3"></div>
<div class="a" style="left:500px;top:800px;width:1px;height:31px;background:#e3e3e3"></div>
<div class="a" style="left:600px;top:800px;width:1px;height:31px;background:#e3e3e3"></div>
<div class="a" style="left:700px;top:800px;width:1px;height:31px;background:#e3e3e3"></div>
<div class="a" style="left:800px;top:800px;width:1px;height:31px;background:#e3e3e3"></div>
<div class="a" style="left:900px;top:800px;width:1px;height:31px;background:#e3e3e3"></div>
<div class="a" style="left:1000px;top:800px;width:1px;height:31px;background:#e3e3e3"></div>
<div class="a" style="left:1111px;top:800px;width:1px;height:31px;background:#e3e3e3"></div>
<div class="a" style="left:1211px;top:800px;width:1px;height:31px;background:#e3e3e3"></div>
<div class="a" style="left:1311px;top:800px;width:1px;height:31px;background:#e3e3e3"></div>
<div class="a" style="left:1391px;top:800px;width:1px;height:31px;background:#e3e3e3"></div>
<div class="a" style="left:1491px;top:800px;width:1px;height:31px;background:#e3e3e3"></div>
<div class="a" style="left:1760px;top:800px;width:1px;height:31px;background:#e3e3e3"></div>
<div class="a" style="left:1862px;top:800px;width:1px;height:31px;background:#e3e3e3"></div>
<div class="t" style="left:205px;top:810px;font-size:12px;color:#333;">小计</div>
<div class="t" style="right:1024px;top:811px;font-size:13px;color:#333;font-weight:bold">0.00</div>
<div class="t" style="right:714px;top:811px;font-size:13px;color:#333;font-weight:bold">0.00</div>
<div class="t" style="right:614px;top:811px;font-size:13px;color:#333;font-weight:bold">0.00</div>
<div class="t" style="right:434px;top:811px;font-size:13px;color:#333;font-weight:bold">0.00</div>
<div class="a" style="left:1854px;top:345px;width:8px;height:323px;background:rgba(0,0,0,.3);border-radius:4px"></div>
<div class="a" style="left:190px;top:861px;width:13px;height:13px;border:1px solid #bdbdbd;border-radius:2px;background:#fff"></div>
<div class="t" style="left:208px;top:862px;font-size:12px;color:#333;">一键收订金</div>
<div class="t" style="left:273px;top:862px;font-size:12px;color:#333;">结算方式</div>
<div class="t" style="left:331px;top:862px;font-size:12px;color:#c0c0c0;">选择...</div>
<div class="a" style="left:331px;top:883px;width:133px;height:1px;background:#dcdcdc"></div>
<svg style="left:446px;top:863px" width="13" height="8" viewBox="0 0 13 8"><path d="M0.7 0.7l5.8 5.8 5.8-5.8" fill="none" stroke="#ff7a33" stroke-width="1.3"/></svg>
<div class="t" style="left:475px;top:862px;font-size:12px;color:#333;">收款账号</div>
<div class="t" style="left:532px;top:862px;font-size:12px;color:#c0c0c0;">选择...</div>
<div class="a" style="left:532px;top:883px;width:133px;height:1px;background:#dcdcdc"></div>
<svg style="left:648px;top:866px" width="11" height="3" viewBox="0 0 11 3"><g fill="#ff7a33"><circle cx="1.5" cy="1.5" r="1.2"/><circle cx="5.5" cy="1.5" r="1.2"/><circle cx="9.5" cy="1.5" r="1.2"/></g></svg>
<div class="t" style="right:1122px;top:862px;font-size:12px;color:#333;">0.00</div>
<div class="a" style="left:675px;top:883px;width:115px;height:1px;background:#dcdcdc"></div>
<svg style="left:815px;top:862px" width="12" height="12" viewBox="0 0 12 12"><circle cx="6" cy="6" r="6" fill="#ff7a33"/><path d="M6 3v6M3 6h6" stroke="#fff" stroke-width="1.3"/></svg>
<div class="t" style="left:831px;top:862px;font-size:12px;color:#ff7a33;">添加</div>
<div class="a" style="left:1633px;top:843px;width:230px;height:44px;background:#f0f0f0"></div>
<div class="t" style="left:1653px;top:850px;font-size:14px;color:#333;">订单金额</div>
<div class="t" style="left:1728px;top:846px;font-size:20px;color:#333;letter-spacing:-1px">0.00</div>
<div class="t" style="left:1653px;top:876px;font-size:14px;color:#333;">随单订金</div>
<div class="t" style="left:1728px;top:871px;font-size:20px;color:#333;letter-spacing:-1px">0.00</div>
<div class="a" style="left:170px;top:877px;width:1734px;height:8px;background:linear-gradient(180deg,rgba(0,0,0,0),rgba(0,0,0,.09))"></div>
<div class="a" style="left:170px;top:885px;width:1734px;height:2px;background:#fff"></div>
<div class="a" style="left:1885px;top:202px;width:40px;height:36px;background:#fff;box-shadow:0 0 12px rgba(0,0,0,.09)"></div>
<div class="a" style="left:1885px;top:240px;width:40px;height:254px;background:#fff;box-shadow:0 0 12px rgba(0,0,0,.09)"></div>
<div class="a" style="left:1885px;top:421px;width:27px;height:1px;background:#e3e3e3"></div>
<div class="a" style="left:1884px;top:202px;width:1px;height:292px;background:rgba(0,0,0,.06)"></div>
<div class="a" style="left:1885px;top:498px;width:40px;height:36px;background:#ff7a33;box-shadow:0 0 12px rgba(0,0,0,.09)"></div>
<svg style="left:1894px;top:211px" width="18" height="18" viewBox="0 0 18 18"><rect x="0.5" y="0.5" width="17" height="17" rx="2.5" fill="none" stroke="#555" stroke-width="1"/></svg>
<div class="t" style="left:1897px;top:214.5px;font-size:11.5px;color:#555;">草</div>
<svg style="left:1894px;top:250px" width="18" height="19" viewBox="0 0 18 19"><path d="M9 0.6L17.4 3.5V10c0 4-4 7.5-8.4 8.4C4.6 17.5 0.6 14 0.6 10V3.5z" fill="none" stroke="#555" stroke-width="1"/></svg>
<div class="t" style="left:1897px;top:253.5px;font-size:11.5px;color:#555;">价</div>
<svg style="left:1894px;top:286px" width="18" height="18" viewBox="0 0 18 18"><rect x="0.5" y="0.5" width="17" height="17" rx="2.5" fill="none" stroke="#555" stroke-width="1"/></svg>
<div class="t" style="left:1897px;top:289.5px;font-size:11.5px;color:#555;">库</div>
<svg style="left:1894px;top:322px" width="18" height="18" viewBox="0 0 18 18"><circle cx="9" cy="9" r="8.5" fill="none" stroke="#555" stroke-width="1"/></svg>
<div class="t" style="left:1897px;top:325.5px;font-size:11.5px;color:#555;">历</div>
<svg style="left:1894px;top:358px" width="18" height="18" viewBox="0 0 18 18"><circle cx="9" cy="9" r="8.5" fill="none" stroke="#555" stroke-width="1"/></svg>
<div class="t" style="left:1897px;top:361.5px;font-size:11.5px;color:#555;">欠</div>
<svg style="left:1894px;top:394px" width="18" height="18" viewBox="0 0 18 18"><rect x="0.5" y="0.5" width="17" height="17" rx="2.5" fill="none" stroke="#555" stroke-width="1"/></svg>
<div class="t" style="left:1897px;top:397.5px;font-size:11.5px;color:#555;">券</div>
<svg style="left:1894px;top:432px" width="18" height="18" viewBox="0 0 18 18"><path d="M11 4L4 11a2.5 2.5 0 0 0 3.5 3.5l8-8a4 4 0 0 0-5.5-5.5L2 9" fill="none" stroke="#555" stroke-width="1.2"/></svg>
<svg style="left:1894px;top:467px" width="18" height="18" viewBox="0 0 18 18"><path d="M9 0.8l2.5 5.4 5.8.6-4.3 4 1.2 5.8L9 13.7l-5.2 2.9L5 10.8.7 6.8l5.8-.6z" fill="none" stroke="#555" stroke-width="1.1"/></svg>
<svg style="left:1893px;top:507px" width="19" height="19" viewBox="0 0 19 19"><g fill="none" stroke="#fff" stroke-width="1.3"><rect x="0.6" y="0.6" width="18" height="18" rx="2"/><path d="M10.5 3.5h5v5M15.5 3.5l-5 5M8.5 15.5h-5v-5M3.5 15.5l5-5"/></g></svg>
<!--BODY--></body></html>
